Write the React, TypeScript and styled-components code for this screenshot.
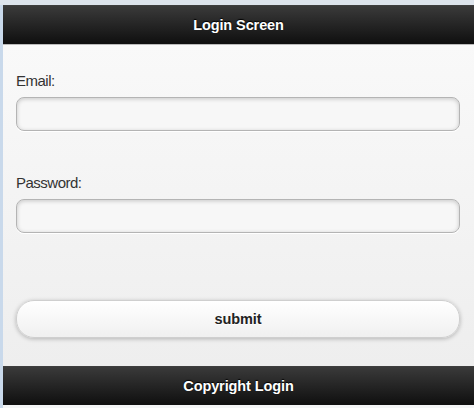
import React from 'react';
import styled, { createGlobalStyle } from 'styled-components';

const GlobalStyle = createGlobalStyle`
  html, body {
    margin: 0;
    padding: 0;
  }
  body {
    background: #f4f5f6;
    font-family: 'Liberation Sans', Arial, Helvetica, sans-serif;
  }
`;

const Frame = styled.div`
  padding: 5px 0 3px 3px;
  background: linear-gradient(to right, #c9d9eb 0, #c9d9eb 3px, #f4f5f6 3px);
  position: relative;
`;

const TopStrip = styled.div`
  position: absolute;
  left: 0;
  right: 0;
  top: 0;
  height: 5px;
  background: #dde4ec;
`;

const Bar = styled.div`
  height: 39px;
  box-sizing: border-box;
  border-top: 1px solid #3e3e3e;
  border-bottom: 1px solid #111;
  background: linear-gradient(#3a3a3a, #101010);
  color: #fff;
  font-weight: bold;
  font-size: 14.5px;
  letter-spacing: -0.1px;
  text-shadow: 0 -1px 1px #000;
  display: flex;
  align-items: center;
  justify-content: center;
`;

const Content = styled.div`
  height: 322px;
  box-sizing: border-box;
  padding: 27px 14px 0 13px;
  background: linear-gradient(#f9f9f9, #eeeeee);
  border-top: 1px solid #bbb;
`;

const Label = styled.label`
  display: block;
  font-size: 15px;
  letter-spacing: -0.5px;
  line-height: 18px;
  color: #333;
  margin-bottom: 7px;
`;

const Field = styled.input<{ $gap?: number }>`
  display: block;
  width: 100%;
  box-sizing: border-box;
  height: 34px;
  border: 1px solid #b4b4b4;
  border-radius: 8px;
  background: #f7f7f7;
  box-shadow: inset 0 1px 4px rgba(0, 0, 0, 0.2), 0 1px 0 #fff;
  margin: 0 0 ${(p) => p.$gap ?? 0}px;
  padding: 0 8px;
  font: inherit;
  outline: none;
`;

const Submit = styled.button`
  display: block;
  width: 100%;
  box-sizing: border-box;
  height: 38px;
  border: 1px solid #cfcfcf;
  border-radius: 18px;
  background: linear-gradient(#ffffff, #f0f0f0);
  box-shadow: 0 1px 4px rgba(0, 0, 0, 0.25);
  color: #222;
  font-family: inherit;
  font-weight: bold;
  font-size: 14.5px;
  letter-spacing: -0.1px;
  text-shadow: 0 1px 0 #fff;
  cursor: pointer;
`;

export default function App() {
  return (
    <>
      <GlobalStyle />
      <Frame>
        <TopStrip />
        <Bar>Login Screen</Bar>
        <Content>
          <Label htmlFor="email">Email:</Label>
          <Field id="email" type="email" $gap={43} />
          <Label htmlFor="password">Password:</Label>
          <Field id="password" type="password" $gap={67} />
          <Submit type="submit">submit</Submit>
        </Content>
        <Bar>Copyright Login</Bar>
      </Frame>
    </>
  );
}
